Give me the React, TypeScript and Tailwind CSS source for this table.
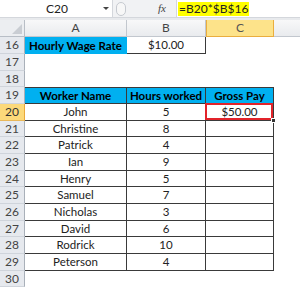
import { Fragment } from "react";

const rows = [
  { n: 21, name: "Christine", hours: "8" },
  { n: 22, name: "Patrick", hours: "4" },
  { n: 23, name: "Ian", hours: "9" },
  { n: 24, name: "Henry", hours: "5" },
  { n: 25, name: "Samuel", hours: "7" },
  { n: 26, name: "Nicholas", hours: "3" },
  { n: 27, name: "David", hours: "6" },
  { n: 28, name: "Rodrick", hours: "10" },
  { n: 29, name: "Peterson", hours: "4" },
];

function RowHead({ n, active }: { n: number; active?: boolean }) {
  return (
    <div
      className={`flex items-center justify-center border-r border-b text-[12px] ${
        active
          ? "bg-[#fcd97a] border-r-[#e9a93a] border-b-[#e9b85a] text-[#333]"
          : "bg-[#e6e9ee] border-r-[#a9b0b9] border-b-[#cfd4db] text-[#444]"
      }`}
    >
      {n}
    </div>
  );
}

const cell = "flex items-center justify-center border-b border-r border-[#3a3a3a]";
const head = "flex items-center justify-center bg-[#00b0f0] border-y border-r border-[#3a3a3a] font-bold text-black";

export default function App() {
  return (
    <div className="w-[300px] h-[287px] overflow-hidden bg-white font-['Lato','Liberation_Sans',sans-serif] text-[11.5px] leading-none text-[#222]">
      {/* name box + formula bar */}
      <div className="flex h-[18px] items-center bg-[#f1f2f4] border-b border-[#d4d7dc]">
        <div className="relative flex h-[17px] w-[113px] items-center justify-center bg-white border-r border-[#d4d7dc] text-[12px] text-[#222]">
          <span className="-mr-[2px]">C20</span>
          <span className="absolute right-[3px] top-[7px] h-0 w-0 border-x-[3px] border-t-[3px] border-x-transparent border-t-[#444]" />
        </div>
        <div className="ml-[3px] h-[14px] w-[10px] rounded-full border border-[#c6cad0] bg-[#f7f7f7]" />
        <div className="flex flex-1 justify-end pr-[10px]">
          <span className="font-['Liberation_Serif',serif] text-[11px] italic text-[#444]">fx</span>
        </div>
        <div className="flex h-[17px] w-[124px] items-center border-l border-[#d4d7dc] bg-white pl-[1px]">
          <span className="bg-[#ffff00] px-[1px] py-[1px] text-[12px] text-[#222]">=B20*$B$16</span>
        </div>
      </div>
      <div className="h-[2px] bg-[#e8eaed]" />

      {/* sheet grid */}
      <div className="grid grid-cols-[25px_102px_79px_68px_1fr] grid-rows-[17px_17px_17px_16px_17px_17px_16px_17px_17px_16px_17px_17px_16px_17px_17px_16px]">
        {/* column header row */}
        <div className="relative bg-[#eceef1] border-r border-b border-[#b8bec6]">
          <span className="absolute bottom-[2px] right-[2px] h-0 w-0 border-l-[10px] border-b-[10px] border-l-transparent border-b-[#c9cdd3]" />
        </div>
        <div className="flex items-center justify-center bg-gradient-to-b from-[#f8f8f9] to-[#e9ebee] border-r border-b border-[#c2c7ce] text-[12px] text-[#444]">
          A
        </div>
        <div className="flex items-center justify-center bg-gradient-to-b from-[#f8f8f9] to-[#e9ebee] border-r border-b border-[#c2c7ce] text-[12px] text-[#444]">
          B
        </div>
        <div className="flex items-center justify-center bg-[#fde38a] border-x border-b border-[#eaae3e] text-[12px] text-[#555]">
          C
        </div>
        <div className="bg-gradient-to-b from-[#f8f8f9] to-[#e9ebee] border-b border-[#c2c7ce]" />

        {/* row 16 */}
        <RowHead n={16} />
        <div className="flex items-center bg-[#00b0f0] pl-[4px] font-bold text-black">Hourly Wage Rate</div>
        <div className="flex items-center justify-center border-r border-b border-[#3a3a3a]">$10.00</div>
        <div />
        <div />

        {/* rows 17-18 */}
        {[17, 18].map((n) => (
          <Fragment key={n}>
            <RowHead n={n} />
            <div />
            <div />
            <div />
            <div />
          </Fragment>
        ))}

        {/* row 19: table header */}
        <RowHead n={19} />
        <div className={`${head} border-l-0`}>Worker Name</div>
        <div className={head}>Hours worked</div>
        <div className={head}>Gross Pay</div>
        <div />

        {/* row 20 */}
        <RowHead n={20} active />
        <div className={cell}>John</div>
        <div className={cell}>5</div>
        <div className={`${cell} relative`}>
          <div className="absolute -left-[1px] -top-[1px] h-[calc(100%+1px)] w-[calc(100%+1px)] border-2 border-[#e2232a]" />
          <div className="absolute -bottom-[3px] -right-[3px] h-[5px] w-[5px] border border-white bg-[#333]" />
          $50.00
        </div>
        <div />

        {rows.map((r) => (
          <Fragment key={r.n}>
            <RowHead n={r.n} />
            <div className={cell}>{r.name}</div>
            <div className={cell}>{r.hours}</div>
            <div className="border-b border-r border-[#3a3a3a]" />
            <div />
          </Fragment>
        ))}

        {/* row 30 */}
        <RowHead n={30} />
        <div />
        <div />
        <div />
        <div />
      </div>
    </div>
  );
}
